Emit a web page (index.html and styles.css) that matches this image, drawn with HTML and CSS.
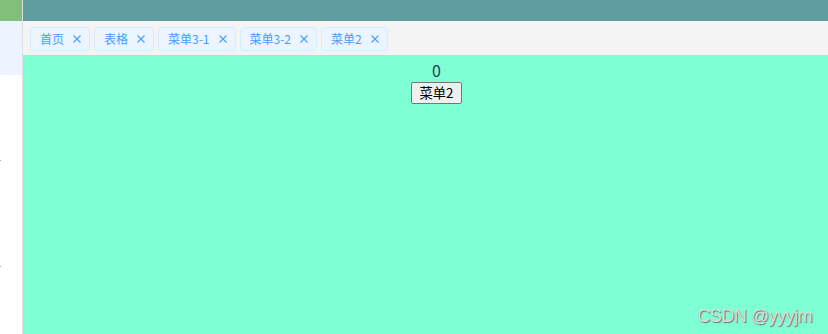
FILE: index.html
```html
<!DOCTYPE html>
<html lang="zh">
<head>
<meta charset="utf-8">
<link rel="stylesheet" href="styles.css">
</head>
<body>
<div class="app">
  <aside class="aside">
    <div class="aside-top"></div>
    <div class="aside-menu"></div>
    <div class="aside-rest">
      <span class="dot dot1"></span>
      <span class="dot dot2"></span>
    </div>
  </aside>
  <div class="main">
    <header class="header"></header>
    <nav class="tabs">
      <span class="tab">首页<svg class="close" viewBox="0 0 8 8"><path d="M0.5 0.5L7.5 7.5M7.5 0.5L0.5 7.5"/></svg></span>
      <span class="tab">表格<svg class="close" viewBox="0 0 8 8"><path d="M0.5 0.5L7.5 7.5M7.5 0.5L0.5 7.5"/></svg></span>
      <span class="tab">菜单3-1<svg class="close" viewBox="0 0 8 8"><path d="M0.5 0.5L7.5 7.5M7.5 0.5L0.5 7.5"/></svg></span>
      <span class="tab">菜单3-2<svg class="close" viewBox="0 0 8 8"><path d="M0.5 0.5L7.5 7.5M7.5 0.5L0.5 7.5"/></svg></span>
      <span class="tab">菜单2<svg class="close" viewBox="0 0 8 8"><path d="M0.5 0.5L7.5 7.5M7.5 0.5L0.5 7.5"/></svg></span>
    </nav>
    <section class="content">
      <div class="count">0</div>
      <button class="btn">菜单2</button>
      <div class="watermark">CSDN @yyyjm</div>
    </section>
  </div>
</div>
</body>
</html>
```
FILE: styles.css
```css
html, body {
  margin: 0;
  padding: 0;
}
body {
  width: 828px;
  height: 334px;
  overflow: hidden;
  font-family: "Microsoft YaHei", "Noto Sans CJK SC", "Noto Sans", sans-serif;
}
.app {
  display: flex;
  height: 334px;
}
.aside {
  width: 22px;
  border-right: 1px solid #dcdfe6;
  display: flex;
  flex-direction: column;
  background: #fff;
}
.aside-top {
  height: 21px;
  background: #80c07b;
}
.aside-menu {
  height: 54px;
  background: #ecf5ff;
}
.aside-rest {
  position: relative;
  flex: 1;
}
.dot {
  position: absolute;
  left: 0;
  width: 1px;
  height: 1px;
  background: #aaa;
}
.dot1 { top: 85px; }
.dot2 { top: 191px; }
.main {
  flex: 1;
  display: flex;
  flex-direction: column;
  min-width: 0;
}
.header {
  height: 21px;
  background: #5f9ea0;
}
.tabs {
  height: 34px;
  box-sizing: border-box;
  background: #f4f4f4;
  display: flex;
  align-items: center;
  gap: 4px;
  padding: 1px 7px 0;
}
.tab {
  height: 24px;
  box-sizing: border-box;
  display: inline-flex;
  align-items: center;
  padding: 0 8px 0 9px;
  border: 1px solid #d9ecff;
  border-radius: 4px;
  background: #ecf5ff;
  color: #409eff;
  font-size: 12px;
  line-height: 22px;
}
.close {
  width: 8px;
  height: 8px;
  margin-left: 9px;
  margin-top: 1px;
}
.close path {
  stroke: #409eff;
  stroke-width: 1.1;
  fill: none;
}
.content {
  position: relative;
  flex: 1;
  background: #7fffd4;
  display: flex;
  flex-direction: column;
  align-items: center;
  padding: 4px 0 0 22px;
  color: #2c3e50;
}
.count {
  font-size: 16px;
  line-height: 22px;
  font-family: "Microsoft YaHei", "Noto Sans CJK SC", sans-serif;
}
.btn {
  display: block;
  font-family: "Microsoft YaHei", "Noto Sans CJK SC", sans-serif;
  font-size: 13.333px;
  height: 22px;
  box-sizing: border-box;
  padding: 0 7px;
  margin-top: 1px;
  line-height: 18px;
  color: #000;
  background: #efefef;
  border: 1px solid #767676;
  border-radius: 2px;
}
.watermark {
  position: absolute;
  right: 16px;
  bottom: 7px;
  font-family: "Liberation Sans", Arial, sans-serif;
  font-size: 18px;
  letter-spacing: -0.5px;
  color: #dcdcdc;
  text-shadow: 1px 1px 1px #6f6f6f;
}
```
